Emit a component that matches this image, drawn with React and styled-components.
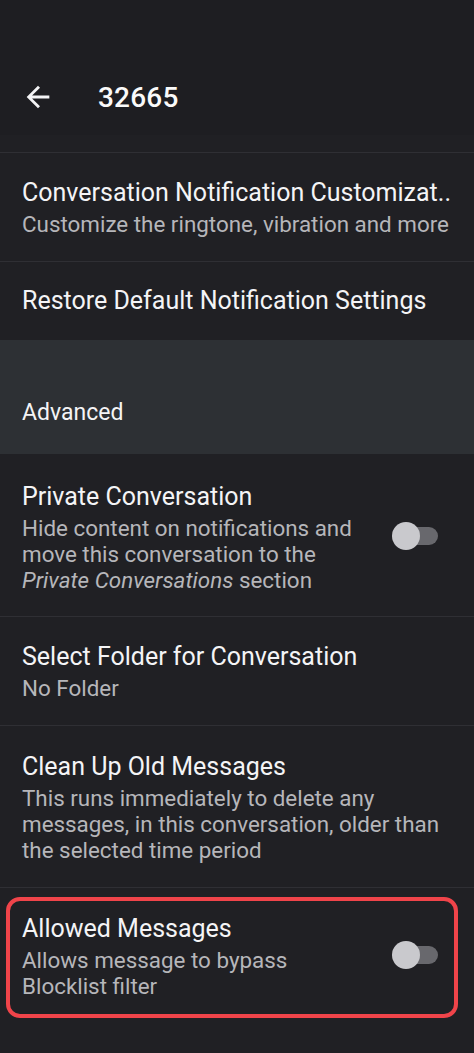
import React from 'react'
import styled, { createGlobalStyle } from 'styled-components'

const Global = createGlobalStyle`
  html, body {
    margin: 0;
    padding: 0;
    background: #202024;
  }
  body {
    font-family: Roboto, "Noto Sans", sans-serif;
    -webkit-font-smoothing: antialiased;
  }
`

const Screen = styled.div`
  width: 474px;
  min-height: 1053px;
  background: #202024;
  color: #f2f2f4;
  display: flex;
  flex-direction: column;
`

const Header = styled.header`
  height: 135px;
  box-sizing: border-box;
  padding-top: 62px;
  display: flex;
  align-items: flex-start;
  background: #1e1e22;
`

const BarRow = styled.div`
  height: 70px;
  display: flex;
  align-items: center;
`

const BackButton = styled.button`
  width: 34px;
  height: 34px;
  margin-left: 21px;
  padding: 0;
  border: 0;
  background: none;
  display: flex;
  align-items: center;
  justify-content: center;
  cursor: pointer;
`

const Title = styled.h1`
  margin: 0 0 0 43px;
  font-size: 28px;
  font-weight: 500;
  color: #fafafa;
  letter-spacing: 0.2px;
`

const Stub = styled.div`
  height: 17px;
  border-bottom: 1px solid #2f2f34;
`

const Row = styled.div`
  display: flex;
  align-items: center;
  padding: ${p => p.$pad || '22px 0 24px'};
  padding-left: 22px;
  padding-right: ${p => (p.$toggle ? '36px' : '14px')};
  border-bottom: ${p => (p.$last ? 'none' : '1px solid #2f2f34')};
  position: relative;
`

const Texts = styled.div`
  flex: 1;
  min-width: 0;
`

const ItemTitle = styled.div`
  font-size: 25px;
  line-height: 36px;
  color: #f4f4f6;
  white-space: nowrap;
  overflow: hidden;
  text-overflow: clip;
`

const ItemSub = styled.div`
  font-size: 22.4px;
  line-height: 26px;
  color: #b6b6ba;
  max-width: ${p => (p.$narrow ? '345px' : 'none')};

  em {
    font-style: italic;
  }
`

const Section = styled.div`
  height: 114px;
  box-sizing: border-box;
  background: #2d3034;
  padding: 56px 22px 0;
  font-size: 23px;
  line-height: 34px;
  color: #f4f4f6;
`

const Toggle = styled.div`
  position: relative;
  width: 46px;
  height: 28px;
  flex-shrink: 0;
  margin-left: 12px;

  &::before {
    content: '';
    position: absolute;
    left: 4px;
    right: 0;
    top: 5px;
    height: 18px;
    border-radius: 9px;
    background: #68686d;
  }

  &::after {
    content: '';
    position: absolute;
    left: 0;
    top: 0;
    width: 28px;
    height: 28px;
    border-radius: 50%;
    background: #c9c9cd;
  }
`

const Highlight = styled.div`
  position: absolute;
  left: 6px;
  top: 9px;
  width: 452px;
  height: 121px;
  box-sizing: border-box;
  border: 4px solid #f0444a;
  border-radius: 14px;
  pointer-events: none;
`

const BackArrow = () => (
  <svg width="34" height="34" viewBox="0 0 24 24" fill="#f4f4f6">
    <path d="M20 11H7.83l5.59-5.59L12 4l-8 8 8 8 1.41-1.41L7.83 13H20v-2z" />
  </svg>
)

const App = () => {
  return (
    <>
      <Global />
      <Screen>
        <Header>
          <BarRow>
            <BackButton aria-label="Back">
              <BackArrow />
            </BackButton>
            <Title>32665</Title>
          </BarRow>
        </Header>
        <Stub />
        <Row>
          <Texts>
            <ItemTitle>Conversation Notification Customizat..</ItemTitle>
            <ItemSub>Customize the ringtone, vibration and more</ItemSub>
          </Texts>
        </Row>
        <Row $pad="21px 0 21px" $last>
          <Texts>
            <ItemTitle>Restore Default Notification Settings</ItemTitle>
          </Texts>
        </Row>
        <Section>Advanced</Section>
        <Row $toggle $pad="25px 0 23px">
          <Texts>
            <ItemTitle>Private Conversation</ItemTitle>
            <ItemSub $narrow>
              Hide content on notifications and move this conversation to the <em>Private Conversations</em> section
            </ItemSub>
          </Texts>
          <Toggle />
        </Row>
        <Row>
          <Texts>
            <ItemTitle>Select Folder for Conversation</ItemTitle>
            <ItemSub>No Folder</ItemSub>
          </Texts>
        </Row>
        <Row $pad="23px 0 24px">
          <Texts>
            <ItemTitle>Clean Up Old Messages</ItemTitle>
            <ItemSub>This runs immediately to delete any messages, in this conversation, older than the selected time period</ItemSub>
          </Texts>
        </Row>
        <Row $toggle $last $pad="23px 0 24px">
          <Texts>
            <ItemTitle>Allowed Messages</ItemTitle>
            <ItemSub $narrow>Allows message to bypass Blocklist filter</ItemSub>
          </Texts>
          <Toggle />
          <Highlight />
        </Row>
      </Screen>
    </>
  )
}

export default App
